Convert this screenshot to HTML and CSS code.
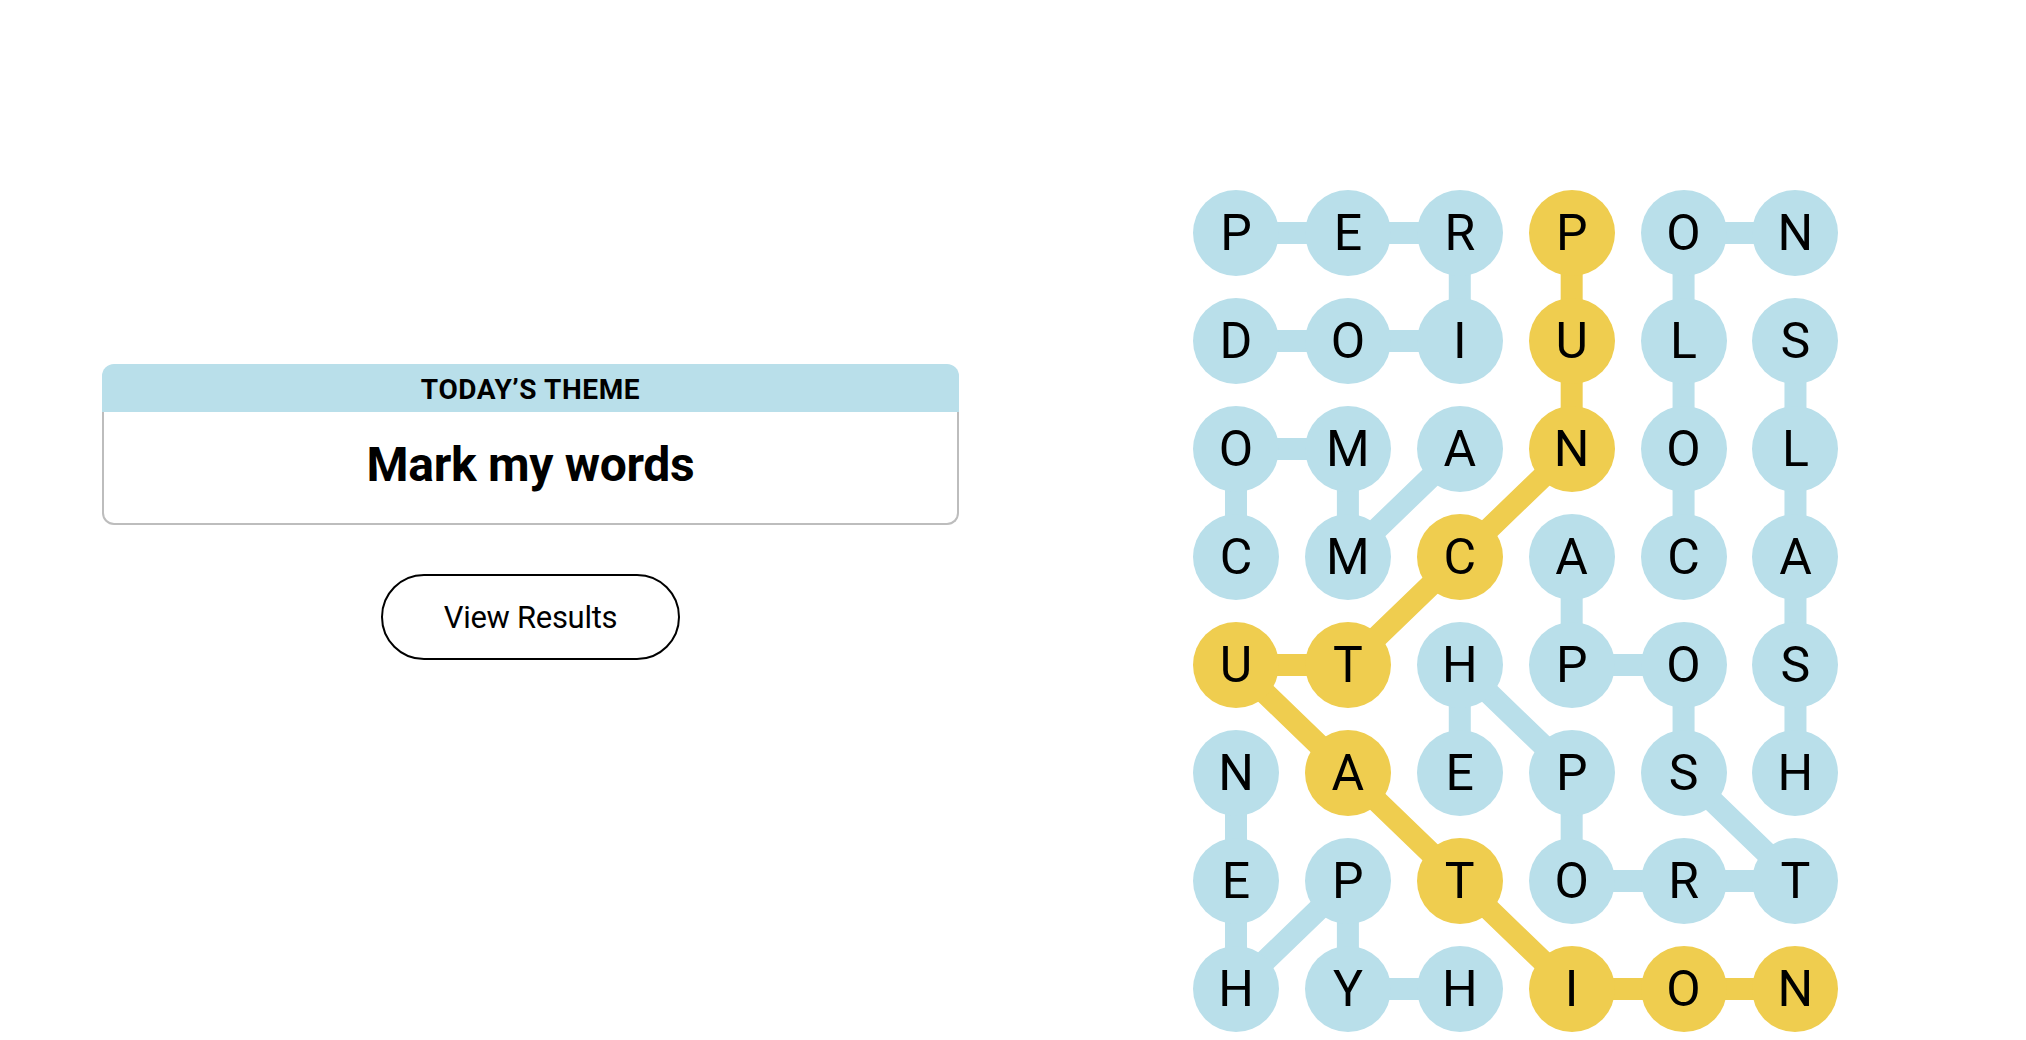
FILE: index.html
```html
<!DOCTYPE html>
<html lang="en">
<head>
<meta charset="utf-8">
<title>Strands</title>
<link rel="stylesheet" href="styles.css">
</head>
<body>
<main class="page">
  <section class="info">
    <div class="theme-card">
      <div class="theme-head">TODAY’S THEME</div>
      <div class="theme-body"><h1 class="theme-title">Mark my words</h1></div>
    </div>
    <button class="results" type="button">View Results</button>
  </section>

  <section class="board">
    <svg class="links" viewBox="0 0 645.5 842" preserveAspectRatio="none" aria-hidden="true">
      <g class="blue">
        <polyline points="43,43 154.9,43 266.8,43 266.8,151 154.9,151 43,151"/>
        <polyline points="43,367 43,259 154.9,259 154.9,367 266.8,259"/>
        <polyline points="490.6,367 490.6,259 490.6,151 490.6,43 602.5,43"/>
        <polyline points="602.5,151 602.5,583"/>
        <polyline points="378.7,367 378.7,475 490.6,475 490.6,583 602.5,691 490.6,691 378.7,691 378.7,583 266.8,475 266.8,583"/>
        <polyline points="266.8,799 154.9,799 154.9,691 43,799 43,691 43,583"/>
      </g>
      <g class="gold">
        <polyline points="378.7,43 378.7,151 378.7,259 266.8,367 154.9,475 43,475 154.9,583 266.8,691 378.7,799 490.6,799 602.5,799"/>
      </g>
    </svg>

    <div class="cell">P</div><div class="cell">E</div><div class="cell">R</div><div class="cell gold">P</div><div class="cell">O</div><div class="cell">N</div>
    <div class="cell">D</div><div class="cell">O</div><div class="cell">I</div><div class="cell gold">U</div><div class="cell">L</div><div class="cell">S</div>
    <div class="cell">O</div><div class="cell">M</div><div class="cell">A</div><div class="cell gold">N</div><div class="cell">O</div><div class="cell">L</div>
    <div class="cell">C</div><div class="cell">M</div><div class="cell gold">C</div><div class="cell">A</div><div class="cell">C</div><div class="cell">A</div>
    <div class="cell gold">U</div><div class="cell gold">T</div><div class="cell">H</div><div class="cell">P</div><div class="cell">O</div><div class="cell">S</div>
    <div class="cell">N</div><div class="cell gold">A</div><div class="cell">E</div><div class="cell">P</div><div class="cell">S</div><div class="cell">H</div>
    <div class="cell">E</div><div class="cell">P</div><div class="cell gold">T</div><div class="cell">O</div><div class="cell">R</div><div class="cell">T</div>
    <div class="cell">H</div><div class="cell">Y</div><div class="cell">H</div><div class="cell gold">I</div><div class="cell gold">O</div><div class="cell gold">N</div>
  </section>
</main>
</body>
</html>
```

FILE: styles.css
```css
html, body {
  margin: 0;
  padding: 0;
  background: #ffffff;
}

body {
  font-family: Roboto, "Liberation Sans", Arial, sans-serif;
  color: #000;
  overflow: hidden;
}

body::after {
  content: "";
  position: fixed;
  left: 560px;
  right: 0;
  bottom: 0;
  height: 70px;
  z-index: -1;
  background: linear-gradient(to bottom, rgba(0, 0, 0, 0), rgba(0, 0, 0, 0.04));
  -webkit-mask-image: linear-gradient(to right, transparent, #000 360px);
  mask-image: linear-gradient(to right, transparent, #000 360px);
}

.page {
  display: flex;
  align-items: flex-start;
  gap: 234px;
  padding-left: 102px;
  height: 1040px;
  box-sizing: border-box;
  overflow: hidden;
}

/* Left info column */
.info {
  width: 857px;
  margin-top: 364px;
  display: flex;
  flex-direction: column;
  align-items: center;
}

.theme-card {
  width: 100%;
}

.theme-head {
  height: 48px;
  background: #b9dfea;
  border-radius: 12px 12px 0 0;
  display: flex;
  align-items: center;
  justify-content: center;
  font-size: 28px;
  font-weight: 700;
  letter-spacing: 0.6px;
  padding-top: 2px;
  box-sizing: border-box;
}

.theme-body {
  height: 113px;
  box-sizing: border-box;
  border: 2px solid #bdbdbd;
  border-top: none;
  border-radius: 0 0 12px 12px;
  display: flex;
  align-items: center;
  justify-content: center;
  padding-bottom: 6px;
}

.theme-title {
  margin: 0;
  font-size: 48px;
  font-weight: 700;
  letter-spacing: -0.3px;
  line-height: 1;
}

.results {
  margin-top: 49px;
  width: 299px;
  height: 86px;
  border: 2px solid #000;
  border-radius: 43px;
  background: #fff;
  color: #000;
  font-family: Roboto, "Liberation Sans", Arial, sans-serif;
  font-size: 31px;
  font-weight: 400;
  letter-spacing: -0.3px;
  padding: 0;
  cursor: pointer;
}

/* Board */
.board {
  position: relative;
  margin-top: 190px;
  display: grid;
  grid-template-columns: repeat(6, 86px);
  grid-auto-rows: 86px;
  column-gap: 25.9px;
  row-gap: 22px;
}

.links {
  position: absolute;
  left: 0;
  top: 0;
  width: 100%;
  height: 100%;
  z-index: 0;
  overflow: visible;
}

.links polyline {
  fill: none;
  stroke-width: 22;
  stroke-linejoin: round;
}

.links .blue polyline {
  stroke: #b9dfea;
}

.links .gold polyline {
  stroke: #efcd4f;
}

.cell {
  position: relative;
  z-index: 1;
  width: 86px;
  height: 86px;
  border-radius: 50%;
  background: #b9dfea;
  display: flex;
  align-items: center;
  justify-content: center;
  font-size: 50px;
  font-weight: 400;
  line-height: 1;
}

.cell.gold {
  background: #efcd4f;
}
```
